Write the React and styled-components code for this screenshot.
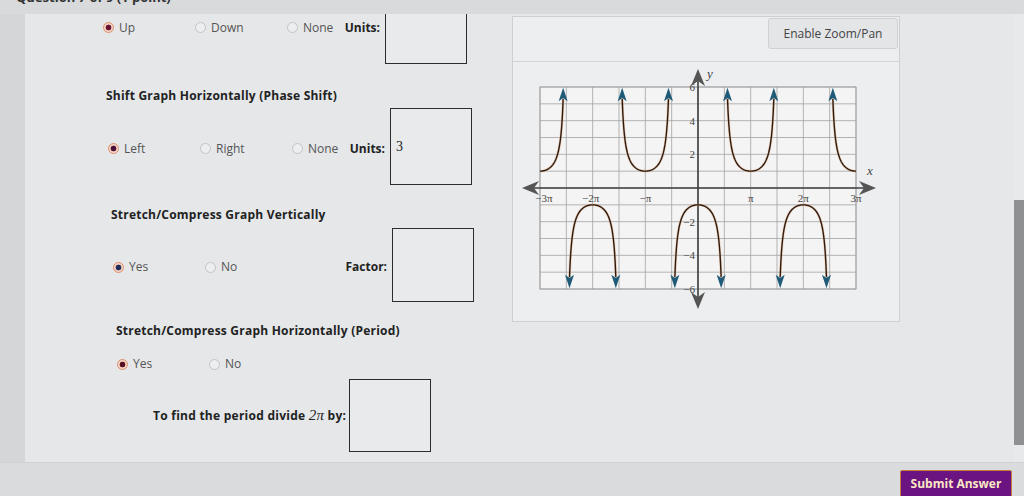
import React from 'react';
import styled, { createGlobalStyle } from 'styled-components';

const GlobalStyle = createGlobalStyle`
  html, body { margin: 0; padding: 0; }
  body {
    font-family: 'Open Sans', 'Liberation Sans', sans-serif;
    background: #e4e6e8;
  }
`;

const Page = styled.div`
  width: 1024px;
  height: 496px;
  display: flex;
  flex-direction: column;
  overflow: hidden;
  background: #e4e6e8;
`;

const TopBar = styled.div`
  height: 14px;
  flex: none;
  overflow: hidden;
  background: #d8dadb;
  padding-left: 16px;
  position: relative;
  z-index: 2;
`;

const TopTitle = styled.div`
  margin-top: -12px;
  font-size: 13px;
  font-weight: 700;
  color: #333;
  line-height: 18px;
`;

const Body = styled.div`
  flex: 1;
  display: flex;
  min-height: 0;
`;

const Gutter = styled.div`
  width: 25px;
  flex: none;
  background: #d4d6d8;
`;

const Main = styled.div`
  flex: 1;
  display: flex;
  overflow: hidden;
  background: #e5e7e9;
`;

const FormColumn = styled.div`
  width: 487px;
  flex: none;
  display: flex;
  flex-direction: column;
`;

const Row = styled.div`
  display: flex;
  align-items: center;
  padding-left: ${p => p.$indent}px;
  margin-top: ${p => p.$mt}px;
`;

const Title = styled.div`
  padding-left: ${p => p.$indent}px;
  margin-top: ${p => p.$mt}px;
  font-size: 12px;
  font-weight: 700;
  letter-spacing: 0.22px;
  line-height: 16px;
  color: #222;
`;

const Options = styled.div`
  display: flex;
  align-items: center;
  width: ${p => (p.$w ? `${p.$w}px` : 'auto')};
  padding-top: 4px;
`;

const Option = styled.label`
  display: flex;
  align-items: center;
  gap: 5px;
  width: ${p => (p.$w ? `${p.$w}px` : 'auto')};
  font-size: 12px;
  color: #555;
  line-height: 16px;
`;

const Radio = styled.span`
  width: 11px;
  height: 11px;
  flex: none;
  box-sizing: border-box;
  border-radius: 50%;
  border: 1px solid ${p => (p.$on ? '#e0906e' : '#c2c4c6')};
  background: ${p =>
    p.$on
      ? `radial-gradient(circle, ${p.$dot} 0 2.6px, #f4d4c4 3.2px)`
      : '#eceef0'};
`;

const FieldLabel = styled.span`
  width: 45px;
  margin-right: 5px;
  text-align: right;
  font-size: 12px;
  font-weight: 700;
  color: #222;
  padding-top: 3px;
`;

const AnswerBox = styled.div`
  width: 82px;
  height: ${p => p.$h}px;
  box-sizing: border-box;
  border: 1.5px solid #2c2c2c;
  background: #e8eaec;
  display: flex;
  align-items: center;
  padding-left: 5px;
  font-family: 'Liberation Serif', serif;
  font-size: 14px;
  color: #222;
`;

const PeriodLabel = styled.span`
  font-size: 12px;
  font-weight: 700;
  letter-spacing: 0.25px;
  color: #222;
  margin-right: 3px;
`;

const Pi = styled.span`
  font-family: 'Liberation Serif', serif;
  font-style: italic;
  font-size: 15px;
  font-weight: 400;
`;

const GraphPanel = styled.div`
  width: 388px;
  height: 306px;
  margin-top: 2px;
  box-sizing: border-box;
  border: 1px solid #cdd0d2;
  background: #eceef0;
  display: flex;
  flex-direction: column;
`;

const PanelHeader = styled.div`
  height: 44px;
  flex: none;
  display: flex;
  justify-content: flex-end;
  align-items: flex-start;
  border-bottom: 1px solid #d2d4d6;
`;

const ZoomButton = styled.button`
  width: 130px;
  height: 31px;
  margin: 1px 1px 0 0;
  border: 1px solid #cfd1d3;
  border-radius: 3px;
  background: #e3e5e7;
  font-family: 'Open Sans', 'Liberation Sans', sans-serif;
  font-size: 12px;
  color: #444;
`;

const GraphWrap = styled.div`
  padding: 1px 0 0 7px;
`;

const Scrollbar = styled.div`
  width: 10px;
  flex: none;
  background: #e8e9ea;
  display: flex;
  flex-direction: column;
`;

const Thumb = styled.div`
  margin-top: 186px;
  height: 245px;
  background: #8f9091;
`;

const Footer = styled.div`
  height: 34px;
  flex: none;
  box-sizing: border-box;
  border-top: 1px solid #cfd1d3;
  background: #dadbdd;
  display: flex;
  justify-content: flex-end;
  padding: 7px 12px 0 0;
`;

const SubmitButton = styled.button`
  width: 112px;
  height: 32px;
  border: 1px solid #c8793c;
  border-radius: 2px;
  background: #6a1381;
  color: #fbe8c4;
  font-family: 'Open Sans', 'Liberation Sans', sans-serif;
  font-size: 12px;
  font-weight: 700;
  padding: 0 0 6px;
`;

/* graph geometry */
const GX = 20, GY = 24, GW = 316, GH = 202;
const X = v => GX + ((v + 3) * GW) / 6; // v in units of π
const Y = v => GY + ((6 - v) * GH) / 12;
const HALF = Math.acos(1 / 5.3) / Math.PI;

function branch(c, from, to) {
  const s = Math.abs(c) % 2 === 1 ? 1 : -1;
  const pts = [];
  const n = 80;
  for (let i = 0; i <= n; i++) {
    const t = from + ((to - from) * i) / n;
    const y = s / Math.cos(t * Math.PI);
    pts.push(`${X(c + t).toFixed(2)},${Y(y).toFixed(2)}`);
  }
  return { d: 'M' + pts.join(' L'), s };
}

function arrowHead(xv, s) {
  const x = X(xv);
  const tip = Y(s * 5.95);
  const base = Y(s * 5.15);
  const notch = Y(s * 5.35);
  return `M${x},${tip} L${x - 4.5},${base} L${x},${notch} L${x + 4.5},${base} Z`;
}

const branches = [
  { c: -3, from: 0, to: HALF, ends: [HALF] },
  { c: -2, from: -HALF, to: HALF, ends: [-HALF, HALF] },
  { c: -1, from: -HALF, to: HALF, ends: [-HALF, HALF] },
  { c: 0, from: -HALF, to: HALF, ends: [-HALF, HALF] },
  { c: 1, from: -HALF, to: HALF, ends: [-HALF, HALF] },
  { c: 2, from: -HALF, to: HALF, ends: [-HALF, HALF] },
  { c: 3, from: -HALF, to: 0, ends: [-HALF] },
];

const yLabels = [6, 4, 2, -2, -4, -6];
const xLabels = [
  { v: -3, t: '−3π', dx: 4 },
  { v: -2, t: '−2π', dx: -2 },
  { v: -1, t: '−π', dx: 0 },
  { v: 1, t: 'π', dx: 0 },
  { v: 2, t: '2π', dx: 0 },
  { v: 3, t: '3π', dx: 0 },
];

const Graph = () => {
  const ax = X(0);
  const ay = Y(0);
  return (
    <svg width="370" height="252" viewBox="0 0 370 252">
      <rect x={GX} y={GY} width={GW} height={GH} fill="#f4f4f4" stroke="#9a9a9a" strokeWidth="0.8" />
      {Array.from({ length: 13 }, (_, i) => (
        <line key={'v' + i} x1={X(-3 + i * 0.5)} y1={GY} x2={X(-3 + i * 0.5)} y2={GY + GH} stroke="#a2a2a2" strokeWidth="0.8" />
      ))}
      {Array.from({ length: 13 }, (_, j) => (
        <line key={'h' + j} x1={GX} y1={Y(6 - j)} x2={GX + GW} y2={Y(6 - j)} stroke="#a2a2a2" strokeWidth="0.8" />
      ))}

      <line x1="8" y1={ay} x2="350" y2={ay} stroke="#3f3f3f" strokeWidth="1.6" />
      <line x1={ax} y1="12" x2={ax} y2="238" stroke="#3f3f3f" strokeWidth="1.6" />
      <path d={`M2,${ay} L19,${ay - 7} L14,${ay} L19,${ay + 7} Z`} fill="#555" />
      <path d={`M356,${ay} L339,${ay - 7} L344,${ay} L339,${ay + 7} Z`} fill="#555" />
      <path d={`M${ax},6 L${ax - 7},23 L${ax},18 L${ax + 7},23 Z`} fill="#555" />
      <path d={`M${ax},246 L${ax - 7},229 L${ax},234 L${ax + 7},229 Z`} fill="#555" />

      <g fontFamily="'Liberation Serif', 'DejaVu Serif', serif" fontSize="11" fill="#444">
        {yLabels.map(v => (
          <text key={v} x={ax - 3} y={Y(v) + 4} textAnchor="end">
            {v < 0 ? `−${-v}` : v}
          </text>
        ))}
        {xLabels.map(l => (
          <text key={l.t} x={X(l.v) + l.dx} y={ay + 14} textAnchor="middle">
            {l.t}
          </text>
        ))}
        <text x="347" y="112" fontStyle="italic" fontSize="13">x</text>
        <text x={ax + 9} y="15" fontStyle="italic" fontSize="13">y</text>
      </g>

      {branches.map(b => {
        const { d, s } = branch(b.c, b.from, b.to);
        return (
          <g key={b.c}>
            <path d={d} fill="none" stroke="#e0a070" strokeWidth="2.6" opacity="0.45" />
            <path d={d} fill="none" stroke="#2e1c10" strokeWidth="1.4" />
            {b.ends.map(e => (
              <path key={e} d={arrowHead(b.c + e, s)} fill="#1f5b78" />
            ))}
          </g>
        );
      })}
    </svg>
  );
};

const App = () => (
  <Page>
    <GlobalStyle />
    <TopBar>
      <TopTitle>Question 7 of 9 (1 point)</TopTitle>
    </TopBar>
    <Body>
      <Gutter />
      <Main>
        <FormColumn>
          <Row $indent={78} $mt={-27}>
            <Options $w={232}>
              <Option $w={92}><Radio $on $dot="#6b1030" />Up</Option>
              <Option $w={92}><Radio />Down</Option>
              <Option><Radio />None</Option>
            </Options>
            <FieldLabel>Units:</FieldLabel>
            <AnswerBox $h={77} />
          </Row>

          <Title $indent={81} $mt={24}>Shift Graph Horizontally (Phase Shift)</Title>
          <Row $indent={83} $mt={4}>
            <Options $w={232}>
              <Option $w={92}><Radio $on $dot="#4a1038" />Left</Option>
              <Option $w={92}><Radio />Right</Option>
              <Option><Radio />None</Option>
            </Options>
            <FieldLabel>Units:</FieldLabel>
            <AnswerBox $h={77}>3</AnswerBox>
          </Row>

          <Title $indent={86} $mt={22}>Stretch/Compress Graph Vertically</Title>
          <Row $indent={88} $mt={5}>
            <Options $w={229}>
              <Option $w={92}><Radio $on $dot="#1e2c5a" />Yes</Option>
              <Option><Radio />No</Option>
            </Options>
            <FieldLabel>Factor:</FieldLabel>
            <AnswerBox $h={74} />
          </Row>

          <Title $indent={91} $mt={21}>Stretch/Compress Graph Horizontally (Period)</Title>
          <Row $indent={92} $mt={13}>
            <Options>
              <Option $w={92}><Radio $on $dot="#5a0f20" />Yes</Option>
              <Option><Radio />No</Option>
            </Options>
          </Row>

          <Row $indent={128} $mt={7}>
            <PeriodLabel>
              To find the period divide <Pi>2π</Pi> by:
            </PeriodLabel>
            <AnswerBox $h={73} />
          </Row>
        </FormColumn>

        <GraphPanel>
          <PanelHeader>
            <ZoomButton>Enable Zoom/Pan</ZoomButton>
          </PanelHeader>
          <GraphWrap>
            <Graph />
          </GraphWrap>
        </GraphPanel>
      </Main>
      <Scrollbar>
        <Thumb />
      </Scrollbar>
    </Body>
    <Footer>
      <SubmitButton>Submit Answer</SubmitButton>
    </Footer>
  </Page>
);

export default App;
